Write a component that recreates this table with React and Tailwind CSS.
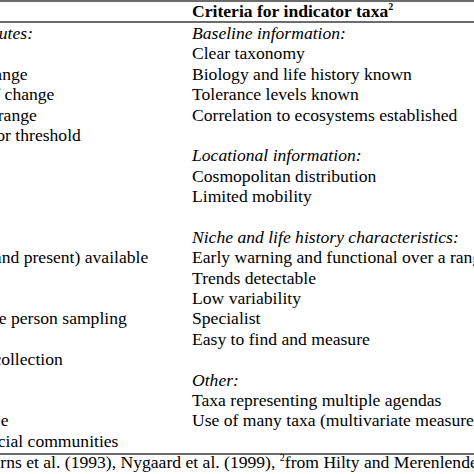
import React from 'react';

const rows = [
    { left: 'Desirable indicator attributes:', right: 'Baseline information:', italic: true },
    { left: 'Anticipatory', right: 'Clear taxonomy' },
    { left: 'Sensitive to landscape change', right: 'Biology and life history known' },
    { left: 'Enables early detection of change', right: 'Tolerance levels known' },
    { left: 'Applicable across a wide range', right: 'Correlation to ecosystems established' },
    { left: 'Has a given trigger point or threshold', right: '' },
    { left: 'Integrative', right: 'Locational information:', italicRight: true },
    { left: '', right: 'Cosmopolitan distribution' },
    { left: 'Cost-effective', right: 'Limited mobility' },
    { left: '', right: '' },
    { left: 'Continuous assessment', right: 'Niche and life history characteristics:', italicRight: true },
    { left: 'Historical data sets (past and present) available', right: 'Early warning and functional over a range of stress' },
    { left: '', right: 'Trends detectable' },
    { left: 'Non-destructive', right: 'Low variability' },
    { left: 'Usable for low-cost, single person sampling', right: 'Specialist' },
    { left: '', right: 'Easy to find and measure' },
    { left: 'Low cost and rapid field collection', right: '' },
    { left: '', right: 'Other:', italicRight: true },
    { left: 'Socially relevant', right: 'Taxa representing multiple agendas' },
    { left: 'Useful at the regional scale', right: 'Use of many taxa (multivariate measures)' },
    { left: 'Represents some commercial communities', right: '' },
];

const App = () => {
    return (
        <div className="w-[474px] h-[474px] overflow-hidden bg-white text-black text-[17.6px] font-['Liberation_Serif','Times_New_Roman',serif]">
            <div className="-ml-[183px] w-[800px] whitespace-nowrap">
                {/* header */}
                <div className="grid grid-cols-[375px_1fr] h-[23px] border-t-2 border-b-2 border-[#6c6c6c] leading-[19px] font-bold">
                    <div>Indicator criteria<sup className="text-[10px] -top-[7px]">1</sup></div>
                    <div>Criteria for indicator taxa<sup className="text-[10px] -top-[7px]">2</sup></div>
                </div>

                {/* body */}
                <div className="grid grid-cols-[375px_1fr] leading-[20.4px] pb-[2px] border-b-2 border-[#6c6c6c]">
                    {rows.map((r, i) => (
                        <React.Fragment key={i}>
                            <div className={`h-[20.4px] ${r.italic ? 'italic' : ''}`}>{r.left}</div>
                            <div className={`h-[20.4px] ${r.italic || r.italicRight ? 'italic' : ''}`}>{r.right}</div>
                        </React.Fragment>
                    ))}
                </div>

                {/* footnote */}
                <p className="leading-[15px]">
                    <sup className="text-[10px] -top-[7px]">1</sup>Criteria derived from Cairns et al. (1993), Nygaard et al. (1999), <sup className="text-[10px] -top-[7px]">2</sup>from Hilty and Merenlender (2000)
                </p>
            </div>
        </div>
    );
};

export default App;
